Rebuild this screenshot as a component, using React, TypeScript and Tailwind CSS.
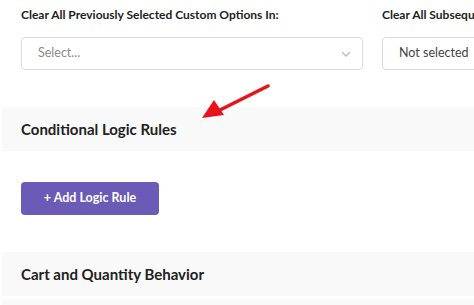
import React from "react";

function Chevron() {
  return (
    <svg width="12" height="12" viewBox="0 0 12 12" fill="none" className="shrink-0">
      <path d="M2.5 4.5 6 8l3.5-3.5" stroke="#b5b5b5" strokeWidth="1.2" strokeLinecap="round" strokeLinejoin="round" />
    </svg>
  );
}

function Field({ label, value, placeholder, width }: { label: string; value?: string; placeholder?: string; width: string }) {
  return (
    <div className={`flex flex-col shrink-0 ${width}`}>
      <div className="h-[19px] flex items-center text-[12px] font-bold text-[#222] whitespace-nowrap overflow-hidden">{label}</div>
      <div className="mt-[13px] h-[33px] rounded-[4px] border border-[#dcdcdc] bg-white flex items-center justify-between pl-4 pr-[10px]">
        {placeholder ? (
          <span className="text-[12.5px] text-[#8a8a8a]">{placeholder}</span>
        ) : (
          <span className="text-[12.5px] text-[#444]">{value}</span>
        )}
        {placeholder && <Chevron />}
      </div>
    </div>
  );
}

function SectionBand({ title }: { title: string }) {
  return (
    <div className="ml-[2px] h-[44px] bg-[#f9f9f9] flex items-center pl-[19px]">
      <h2 className="text-[15px] font-bold text-[#222]">{title}</h2>
    </div>
  );
}

export default function App() {
  return (
    <div className="relative w-[474px] h-[305px] overflow-hidden bg-white" style={{ fontFamily: "Lato, 'Noto Sans', sans-serif" }}>
      <div className="flex gap-[19px] pl-[21px] pt-[5px]">
        <Field label="Clear All Previously Selected Custom Options In:" placeholder="Select..." width="w-[342px]" />
        <Field label="Clear All Subsequent Custom Options" value="Not selected" width="w-[200px]" />
      </div>

      <div className="mt-[37px]">
        <SectionBand title="Conditional Logic Rules" />
      </div>

      <div className="pl-[21px] pt-[31px]">
        <button className="w-[138px] h-[33px] rounded-[4px] bg-[#6b5bb6] text-white text-[12.5px] font-bold">
          + Add Logic Rule
        </button>
      </div>

      <div className="mt-[37px]">
        <SectionBand title="Cart and Quantity Behavior" />
        <div className="ml-[2px] mt-[3px] h-[10px] bg-[#f9f9f9]" />
      </div>

      {/* red annotation arrow */}
      <svg className="absolute left-0 top-0 pointer-events-none" width="474" height="305">
        <line x1="268" y1="86" x2="220" y2="110" stroke="#e8141c" strokeWidth="3.5" strokeLinecap="round" />
        <polygon points="202,118 214,100 224,115" fill="#e8141c" />
      </svg>
    </div>
  );
}
